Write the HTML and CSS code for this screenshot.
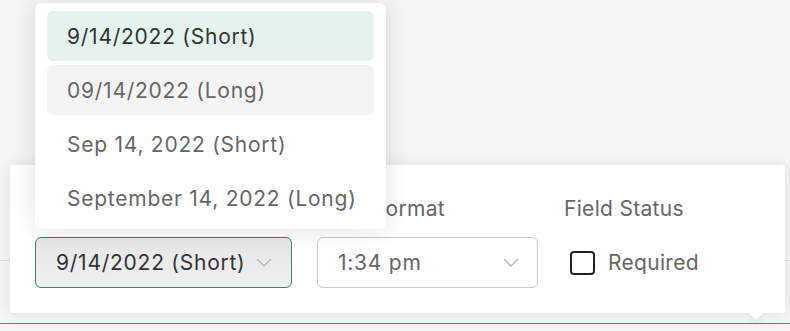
FILE: index.html
```html
<!DOCTYPE html>
<html>
<head>
<meta charset="utf-8">
<link rel="stylesheet" href="styles.css">
</head>
<body>
<div class="stage">
  <div class="panel">
    <div class="row">
      <div class="field date">
        <div class="label">Date Format</div>
        <div class="select active">
          <span class="value">9/14/2022 (Short)</span>
          <svg class="chev" viewBox="0 0 16 9" width="16" height="9"><path d="M1 1 L8 8 L15 1" fill="none" stroke="#b3b3b3" stroke-width="1.3"/></svg>
        </div>
      </div>
      <div class="field time">
        <div class="label">Time Format</div>
        <div class="select">
          <span class="value muted">1:34 pm</span>
          <svg class="chev" viewBox="0 0 16 9" width="16" height="9"><path d="M1 1 L8 8 L15 1" fill="none" stroke="#b3b3b3" stroke-width="1.3"/></svg>
        </div>
      </div>
      <div class="field status">
        <div class="label">Field Status</div>
        <label class="check">
          <span class="box"></span>
          <span class="check-text">Required</span>
        </label>
      </div>
    </div>
    <div class="caret"></div>
  </div>
  <div class="rule"></div>
  <div class="menu">
    <div class="item selected">9/14/2022 (Short)</div>
    <div class="item hover">09/14/2022 (Long)</div>
    <div class="item">Sep 14, 2022 (Short)</div>
    <div class="item">September 14, 2022 (Long)</div>
  </div>
</div>
</body>
</html>
```
FILE: styles.css
```css
html, body {
  margin: 0;
  padding: 0;
}
body {
  background-color: #f5f5f5;
  background-image: linear-gradient(#dcdcdc, #dcdcdc);
  background-size: 100% 1px;
  background-position: 0 260px;
  background-repeat: no-repeat;
  font-family: Inter, "Liberation Sans", Arial, sans-serif;
  width: 790px;
  height: 331px;
  overflow: hidden;
}
.stage {
  position: relative;
  height: 331px;
  padding-top: 165px;
  box-sizing: border-box;
}
.panel {
  position: relative;
  margin: 0 5px 0 10px;
  height: 148px;
  background: #fff;
  box-shadow: 0 0 14px rgba(0, 0, 0, 0.09);
  border-radius: 2px;
  padding: 32px 25px 0 25px;
  box-sizing: border-box;
}
.row {
  display: flex;
  gap: 25px;
}
.field {
  display: flex;
  flex-direction: column;
}
.field.date { width: 257px; }
.field.time { width: 221px; margin-right: 1px; }
.label {
  font-size: 21px;
  line-height: 24px;
  color: #666;
  letter-spacing: 0.3px;
  margin-bottom: 16px;
  white-space: nowrap;
}
.select {
  height: 51px;
  box-sizing: border-box;
  border: 1px solid #c9c9c9;
  border-radius: 6px;
  background: #fff;
  display: flex;
  align-items: center;
  justify-content: space-between;
  padding: 0 18px 0 20px;
}
.select.active {
  border-color: #2e8a6c;
  background: linear-gradient(#e6e6e6, #efefef);
  padding-right: 19px;
}
.value {
  font-size: 21px;
  color: #333;
  letter-spacing: 0.75px;
  white-space: nowrap;
}
.value.muted { color: #666; }
.chev { display: block; }
.check {
  display: flex;
  align-items: center;
  height: 51px;
  padding-left: 6px;
}
.box {
  width: 25px;
  height: 24px;
  box-sizing: border-box;
  border: 2px solid #222;
  border-radius: 4px;
  margin-right: 13px;
}
.check-text {
  font-size: 21px;
  color: #666;
  letter-spacing: 0.3px;
}
.caret {
  position: absolute;
  right: 24px;
  bottom: -5px;
  width: 10px;
  height: 10px;
  background: #fff;
  transform: rotate(45deg);
  box-shadow: 3px 3px 5px rgba(0, 0, 0, 0.06);
}
.rule {
  margin-top: 10px;
  height: 1px;
  background: #3a9a62;
}
.menu {
  position: absolute;
  left: 35px;
  top: 3px;
  width: 351px;
  height: 226px;
  box-sizing: border-box;
  padding: 8px 12px 6px;
  background: #fff;
  border-radius: 6px;
  box-shadow: 0 0 24px rgba(0, 0, 0, 0.12);
  display: flex;
  flex-direction: column;
  gap: 4px;
}
.item {
  height: 50px;
  border-radius: 6px;
  display: flex;
  align-items: center;
  padding-left: 20px;
  font-size: 21px;
  color: #666;
  letter-spacing: 0.75px;
  white-space: nowrap;
}
.item.selected {
  background: #e5f3ee;
  color: #333;
}
.item.hover {
  background: #f4f4f4;
}
```
